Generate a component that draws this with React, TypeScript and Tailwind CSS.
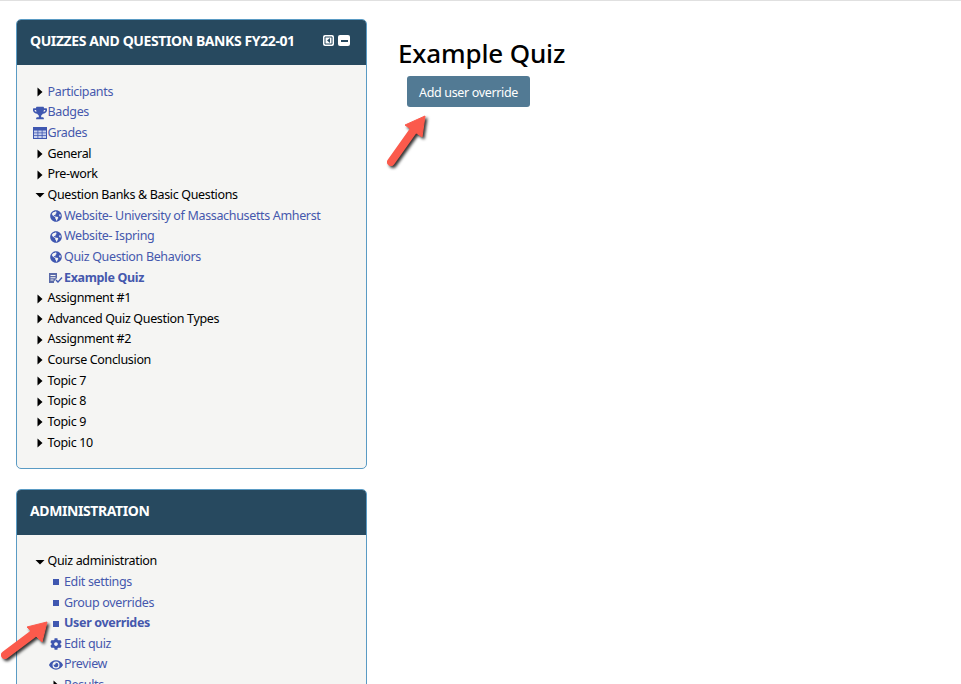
import type { ReactNode } from 'react';
import { FaCog, FaEye, FaGlobeAmericas, FaTrophy } from 'react-icons/fa';

const link = 'text-[#4558ad]';
const blue = 'text-[#3f57b0]';

function Caret({ open }: { open?: boolean }) {
  return (
    <svg width="12" height="12" viewBox="0 0 12 12" className="-ml-[1px] shrink-0">
      {open ? <path d="M1.500 4h9L6 8.500z" fill="#000" /> : <path d="M3.500 1.500L8.500 6l-5 4.500z" fill="#000" />}
    </svg>
  );
}

function QuizIcon() {
  return (
    <svg width="14" height="12" viewBox="0 0 14 12" fill="#5a6aa8">
      <path d="M0 1h8v5L5 9.500V11H0zM1.500 3v1h5V3zm0 2.200v1h5v-1zm0 2.200v1h3v-1z" fillRule="evenodd" />
      <path d="M6.500 8.500l1-1 1.500 1.500L12.500 5l1 1-4.500 5z" fill="#3f57b0" />
    </svg>
  );
}

function TableIcon() {
  return (
    <svg width="14" height="12" viewBox="0 0 14 12">
      <path d="M0 0h14v12H0z" fill="#3f57b0" />
      <path d="M1 3.500h3.500v2H1zM5.300 3.500h3.400v2H5.300zM9.500 3.500H13v2H9.500zM1 6.200h3.500v2H1zM5.300 6.200h3.400v2H5.300zM9.500 6.200H13v2H9.500zM1 8.900h3.500V11H1zM5.300 8.900h3.400V11H5.300zM9.500 8.900H13V11H9.500z" fill="#c9d2ee" />
    </svg>
  );
}

function Row({ icon, indent, className, children }: { icon: ReactNode; indent?: boolean; className?: string; children: ReactNode }) {
  return (
    <div className={`flex h-[20.65px] items-center ${indent ? 'pl-[31px]' : 'pl-[16px]'} ${className ?? ''}`}>
      <span className={`flex shrink-0 items-center justify-center ${indent ? 'w-[16px]' : 'w-[14.500px]'}`}>{icon}</span>
      <span className="whitespace-nowrap">{children}</span>
    </div>
  );
}

function Panel({ title, controls, className, children }: { title: string; controls?: boolean; className?: string; children: ReactNode }) {
  return (
    <section className={`overflow-hidden rounded-[5px] border border-[#5a9bc4] bg-[#f5f5f3] ${className ?? ''}`}>
      <header className="flex h-[45px] items-center justify-between bg-[#27495f] pb-[4px] pl-[13px] pr-[16px]">
        <h2 className="text-[14px] font-bold tracking-[-0.4px] text-white">{title}</h2>
        {controls && (
          <div className="flex items-center gap-[4px]">
            <span className="flex h-[11px] w-[11px] items-center justify-center rounded-[2px] bg-white">
              <svg width="9" height="9" viewBox="0 0 9 9"><path d="M1 1h7v7H1z" fill="none" stroke="#27495f" /><path d="M6 2v5L3 4.500z" fill="#27495f" /></svg>
            </span>
            <span className="flex h-[11px] w-[12px] items-center justify-center rounded-[2px] bg-white">
              <span className="h-[2px] w-[7px] bg-[#27495f]" />
            </span>
          </div>
        )}
      </header>
      <div className="pt-[16.800px] pb-[14.800px]">{children}</div>
    </section>
  );
}

function Bullet() {
  return <span className="h-[6px] w-[6px] bg-[#3f57b0]" />;
}

function Arrow({ shaft, head }: { shaft: string; head: string }) {
  return (
    <svg width="961" height="684" viewBox="0 0 961 684" className="absolute top-0 left-0">
      <g className="drop-shadow-[2px_2px_1.500px_rgba(0,0,0,0.8)]">
        <path d={shaft} stroke="#fb5a4c" strokeWidth="8" strokeLinecap="round" fill="none" />
        <path d={head} fill="#fb5a4c" strokeLinejoin="round" stroke="#fb5a4c" />
      </g>
    </svg>
  );
}

export default function App() {
  return (
    <div className="relative h-[684px] overflow-hidden bg-white font-['Noto_Sans',sans-serif] text-[12.500px] tracking-[-0.34px] text-black">
      <div className="h-px bg-[#e0e0e0]" />
      <div className="flex items-start">
        <aside className="ml-4 mt-[18px] w-[351px] shrink-0">
          <Panel title="QUIZZES AND QUESTION BANKS FY22-01" controls>
            <Row icon={<Caret />} className={link}>Participants</Row>
            <Row icon={<FaTrophy size={14} className={blue} />} className={link}>Badges</Row>
            <Row icon={<TableIcon />} className={link}>Grades</Row>
            <Row icon={<Caret />}>General</Row>
            <Row icon={<Caret />}>Pre-work</Row>
            <Row icon={<Caret open />}>Question Banks &amp; Basic Questions</Row>
            <Row indent icon={<FaGlobeAmericas size={12} className={blue} />} className={link}>Website- University of Massachusetts Amherst</Row>
            <Row indent icon={<FaGlobeAmericas size={12} className={blue} />} className={link}>Website- Ispring</Row>
            <Row indent icon={<FaGlobeAmericas size={12} className={blue} />} className={link}>Quiz Question Behaviors</Row>
            <Row indent icon={<QuizIcon />} className={`${link} font-bold`}>Example Quiz</Row>
            <Row icon={<Caret />}>Assignment #1</Row>
            <Row icon={<Caret />}>Advanced Quiz Question Types</Row>
            <Row icon={<Caret />}>Assignment #2</Row>
            <Row icon={<Caret />}>Course Conclusion</Row>
            <Row icon={<Caret />}>Topic 7</Row>
            <Row icon={<Caret />}>Topic 8</Row>
            <Row icon={<Caret />}>Topic 9</Row>
            <Row icon={<Caret />}>Topic 10</Row>
          </Panel>
          <Panel title="ADMINISTRATION" className="mt-[19.400px]">
            <Row icon={<Caret open />}>Quiz administration</Row>
            <Row indent icon={<Bullet />} className={link}>Edit settings</Row>
            <Row indent icon={<Bullet />} className={link}>Group overrides</Row>
            <Row indent icon={<Bullet />} className={`${link} font-bold`}>User overrides</Row>
            <Row indent icon={<FaCog size={12} className={blue} />} className={link}>Edit quiz</Row>
            <Row indent icon={<FaEye size={14} className={blue} />} className={link}>Preview</Row>
            <Row indent icon={<Caret />} className={link}>Results</Row>
          </Panel>
        </aside>
        <main className="ml-[31px] mt-[33px]">
          <h1 className="text-[26px] leading-[38px] font-medium tracking-[-0.15px]">Example Quiz</h1>
          <button className="ml-[9px] mt-[4px] h-[31px] rounded-[3px] bg-[#527a94] px-3 pt-[3px] text-white">Add user override</button>
        </main>
      </div>
      <Arrow shaft="M391 162L413 131" head="M425 116L405 125L422 137Z" />
      <Arrow shaft="M5 655L33 634" head="M47 622L27 627L42 642Z" />
    </div>
  );
}
